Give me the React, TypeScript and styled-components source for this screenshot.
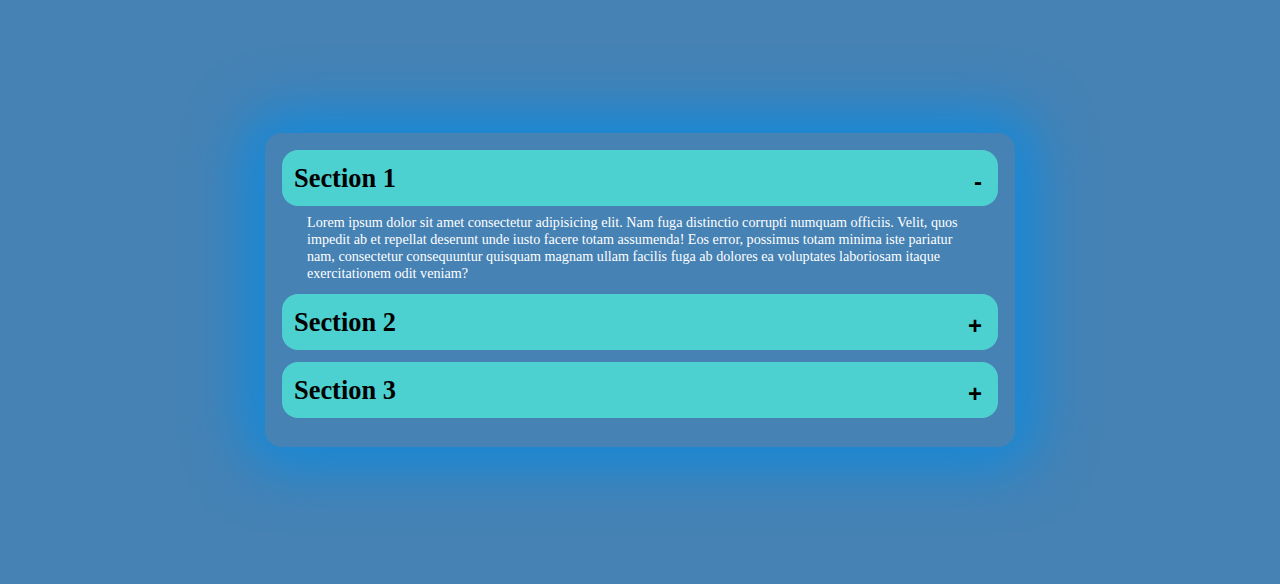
import React, { useState } from "react";
import styled, { createGlobalStyle } from "styled-components";

const GlobalStyle = createGlobalStyle`
  html, body, #root {
    height: 100%;
  }

  body {
    margin: 0;
    background-color: steelblue;
    font-family: "Liberation Serif", "Times New Roman", serif;
  }
`;

const Page = styled.main`
  display: flex;
  align-items: center;
  justify-content: center;
  box-sizing: border-box;
  height: 100%;
  padding-bottom: 4px;
`;

const Accordion = styled.section`
  width: 750px;
  box-sizing: border-box;
  padding: 16px;
  border: 1px solid steelblue;
  border-radius: 16px;
  background-color: steelblue;
  box-shadow: 0 0 55px 22px #1589d8;
`;

const Item = styled.div`
  margin-bottom: 12px;
`;

const Header = styled.button<{ open?: boolean }>`
  display: flex;
  align-items: center;
  justify-content: space-between;
  width: 100%;
  height: 56px;
  padding: 0 16px 0 12px;
  border: none;
  border-radius: 16px;
  background-color: #4dd0d0;
  color: #000;
  cursor: pointer;
  text-align: left;
`;

const Title = styled.h2`
  margin: 0;
  font-family: "Liberation Serif", "Times New Roman", serif;
  font-size: 26.4px;
  font-weight: bold;
`;

const Sign = styled.span`
  font-family: "Liberation Sans", Arial, sans-serif;
  font-size: 24px;
  font-weight: bold;
  line-height: 1;
  padding-top: 7px;
`;

const Content = styled.p`
  margin: 0;
  padding: 8px 25px 0;
  color: #fff;
  font-size: 14.15px;
  line-height: 17px;
`;

const sections = [
  {
    title: "Section 1",
    body:
      "Lorem ipsum dolor sit amet consectetur adipisicing elit. Nam fuga distinctio corrupti numquam officiis. Velit, quos impedit ab et repellat deserunt unde iusto facere totam assumenda! Eos error, possimus totam minima iste pariatur nam, consectetur consequuntur quisquam magnam ullam facilis fuga ab dolores ea voluptates laboriosam itaque exercitationem odit veniam?",
  },
  {
    title: "Section 2",
    body:
      "Lorem ipsum dolor sit amet consectetur adipisicing elit. Nam fuga distinctio corrupti numquam officiis.",
  },
  {
    title: "Section 3",
    body:
      "Lorem ipsum dolor sit amet consectetur adipisicing elit. Nam fuga distinctio corrupti numquam officiis.",
  },
];

export default function App() {
  const [openIndex, setOpenIndex] = useState<number | null>(0);

  return (
    <>
      <GlobalStyle />
      <Page>
        <Accordion>
          {sections.map((section, i) => {
            const open = openIndex === i;
            return (
              <Item key={section.title}>
                <Header open={open} onClick={() => setOpenIndex(open ? null : i)}>
                  <Title>{section.title}</Title>
                  <Sign>{open ? "-" : "+"}</Sign>
                </Header>
                {open && <Content>{section.body}</Content>}
              </Item>
            );
          })}
        </Accordion>
      </Page>
    </>
  );
}
